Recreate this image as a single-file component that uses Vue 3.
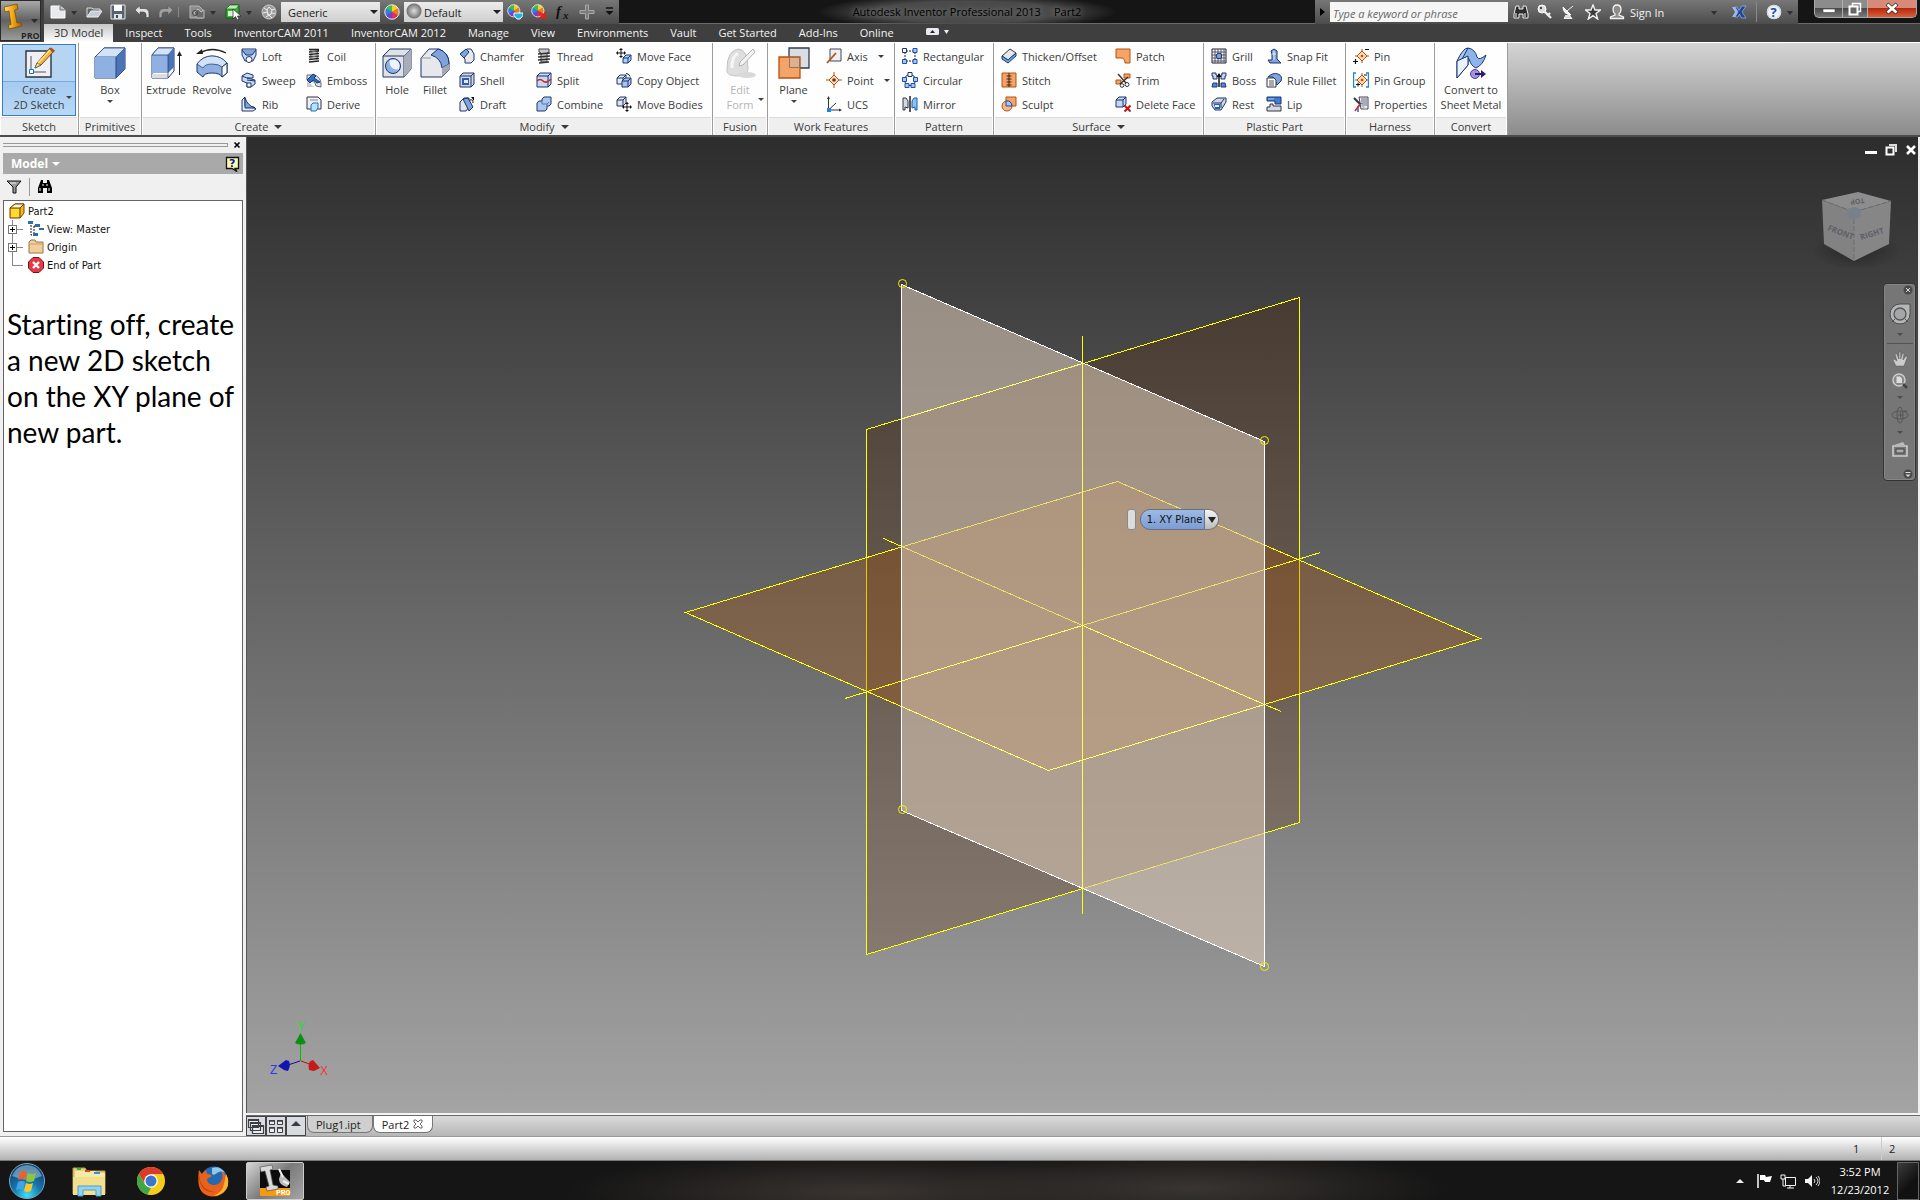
<template>
    <div class="inventor">
        <header class="top">
            <button class="app-menu" aria-label="Application menu">
                <Ico name="appI" :size="40" />
            </button>
            <div class="title-row">
                <div class="quick">
                    <button v-for="q in quickLeft" :key="q.name" class="tool" :class="{ drop: q.drop, bar: q.bar }" :aria-label="q.name">
                        <Ico :name="q.name" :size="16" />
                    </button>
                    <span class="combo">
                        <select aria-label="Material"><option>Generic</option></select>
                    </span>
                    <button class="tool wheel" aria-label="wheel"><Ico name="wheel" :size="16" /></button>
                    <span class="combo ball">
                        <select aria-label="Appearance"><option>Default</option></select>
                    </span>
                    <button v-for="q in quickRight" :key="q" class="tool" :aria-label="q"><Ico :name="q" :size="16" /></button>
                    <button class="tool last" aria-label="Customize"><Ico name="custom" :size="16" /></button>
                </div>
                <h1 class="caption"><span>Autodesk Inventor Professional 2013</span><span>Part2</span></h1>
                <div class="info">
                    <button class="expand" aria-label="Collapse search"></button>
                    <input type="text" aria-label="Search help" placeholder="Type a keyword or phrase">
                    <button v-for="q in infoTools" :key="q" class="tool" :aria-label="q"><Ico :name="q" :size="16" /></button>
                    <button class="sign">Sign In</button>
                    <button class="tool" aria-label="exchange"><Ico name="exchange" :size="16" /></button>
                    <i class="split"></i>
                    <button class="tool drop" aria-label="help"><Ico name="help" :size="16" /></button>
                </div>
                <div class="win-buttons">
                    <button aria-label="Minimize"><Ico name="winMin" :size="16" /></button>
                    <button class="restore" aria-label="Restore"><Ico name="winRestore" :size="16" /></button>
                    <button class="close" aria-label="Close"><Ico name="winClose" :size="16" /></button>
                </div>
            </div>
            <nav class="tabs">
                <button v-for="t in tabs" :key="t" :class="{ active: t === activeTab }" @click="activeTab = t">{{ t }}</button>
                <button class="mini" aria-label="Minimize ribbon"><Ico name="mini" :size="24" /></button>
            </nav>
        </header>

        <section class="ribbon">
            <div v-for="p in panels" :key="p.label" class="panel">
                <div class="panel-body" :class="p.cols">
                    <template v-for="(c, i) in p.items" :key="i">
                        <button v-if="c.big" class="big" :class="{ on: c.on, off: c.off, side: c.side, under: c.under }">
                            <span class="pic"><Ico :name="c.big" :size="32" /></span>
                            <span class="cap">{{ c.text }}</span>
                        </button>
                        <div v-else class="stack">
                            <button v-for="s in c.list" :key="s[1]" :class="{ more: s[2] }">
                                <Ico :name="s[0]" :size="16" />{{ s[1] }}
                            </button>
                        </div>
                    </template>
                </div>
                <div class="panel-label" :class="{ more: p.more }">{{ p.label }}</div>
            </div>
        </section>

        <main class="work">
            <aside class="browser">
                <div class="grip"><i></i><button aria-label="Close browser"><Ico name="gripX" :size="8" /></button></div>
                <div class="browser-head">
                    <button class="more">Model</button>
                    <button aria-label="Browser help"><Ico name="tip" :size="16" /></button>
                </div>
                <div class="browser-tools">
                    <button aria-label="Filter"><Ico name="funnel" :size="16" /></button>
                    <i></i>
                    <button aria-label="Find"><Ico name="find" :size="16" /></button>
                </div>
                <div class="tree-box">
                    <ul class="tree">
                        <li class="root"><Ico name="part" :size="16" />Part2</li>
                        <li v-for="n in nodes" :key="n.text" :class="n.state">
                            <i class="branch"></i><Ico :name="n.icon" :size="16" />{{ n.text }}
                        </li>
                    </ul>
                    <p class="note">Starting off, create<br>a new 2D sketch<br>on the XY plane of<br>new part.</p>
                </div>
            </aside>

            <div class="document">
                <div class="viewport">
                    <svg class="scene" viewBox="247 137 1671 976">
                        <g shape-rendering="crispEdges" fill="none" stroke-width="1">
                            <path d="M866.500 429.500L1299.500 297.500V822.500L866.500 954.500z" fill="rgba(98,45,0,.23)" stroke="#ffff00" />
                            <path d="M685.500 612.500L1117.500 481.500L1480.500 638.500L1048.500 770.500z" fill="rgba(173,86,10,.3)" stroke="#ffff00" />
                            <path d="M883.500 538.500L1082.500 625.500M1082.500 625.500L1320.500 552.500" stroke="#ffff00" />
                            <path d="M901.500 284.500L1264.500 441.500V966.500L901.500 810.500z" fill="rgba(217,200,182,.58)" />
                            <path d="M901.500 419L1082.500 363.500M901.500 706.500L1048.500 770.500L1264.500 704.500M1082.500 625.500L901.500 681M1082.500 625.500L1264.500 704.500" stroke="#ffff66" />
                            <path d="M1264.500 704.500L1281.500 711.500M901.500 681L845 698.500M1082.500 336V363M1082.500 888V914" stroke="#ffff00" />
                            <path d="M1082.500 363V888" stroke="#ffff4a" />
                            <path d="M901.500 284.500L1264.500 441.500V966.500L901.500 810.500z" stroke="#ffffff" />
                        </g>
                        <g fill="none" stroke="#f4f400">
                            <circle v-for="v in corners" :key="v.join()" :cx="v[0]" :cy="v[1]" r="4" />
                        </g>
                    </svg>

                    <div class="picker">
                        <i class="handle"></i>
                        <button class="choice">1. XY Plane</button><button class="pick-drop" aria-label="More planes"></button>
                    </div>

                    <div class="doc-buttons">
                        <button aria-label="Minimize document"><Ico name="docMin" :size="14" /></button>
                        <button aria-label="Restore document"><Ico name="docRestore" :size="14" /></button>
                        <button aria-label="Close document"><Ico name="docClose" :size="14" /></button>
                    </div>

                    <svg class="cube" viewBox="0 0 92 92" width="92" height="92">
                        <defs>
                            <radialGradient id="shade"><stop offset="0" stop-color="#222" stop-opacity=".8" /><stop offset="1" stop-color="#222" stop-opacity="0" /></radialGradient>
                        </defs>
                        <ellipse cx="46" cy="66" rx="44" ry="20" fill="url(#shade)" />
                        <path d="M12 16L48 8L81 17L44 28z" fill="#8d8d8d" />
                        <path d="M12 16L44 28V77L14 60z" fill="#828282" />
                        <path d="M44 28L81 17L79 60L44 77z" fill="#868686" />
                        <path d="M12 16L44 28L81 17M44 28V77" fill="none" stroke="#6c6c6c" stroke-dasharray="5 2" />
                        <path d="M37 25L44 23L51 25V33L44 36L37 33z" fill="#7a808a" />
                        <text x="0" y="0" transform="translate(17 46) rotate(21)">FRONT</text>
                        <text x="0" y="0" transform="translate(51 56) rotate(-17)">RIGHT</text>
                        <text class="up" x="0" y="0" transform="translate(54 14) rotate(172)">TOP</text>
                    </svg>

                    <div class="navbar">
                        <button class="end" aria-label="Close bar"><Ico name="navX" :size="10" /></button>
                        <button class="wheel-btn" aria-label="Steering wheel"><Ico name="steer" :size="24" /></button>
                        <i class="tri"></i>
                        <hr>
                        <button aria-label="Pan"><Ico name="hand" :size="16" /></button>
                        <button aria-label="Zoom"><Ico name="zoom" :size="16" /></button>
                        <i class="tri"></i>
                        <button aria-label="Orbit"><Ico name="orbit" :size="18" /></button>
                        <i class="tri"></i>
                        <button aria-label="Look at"><Ico name="look" :size="16" /></button>
                        <button class="end" aria-label="Bar options"><Ico name="navMore" :size="10" /></button>
                    </div>

                    <svg class="triad" viewBox="0 0 70 60" width="70" height="60">
                        <path d="M34.500 42V20" stroke="#00c000" />
                        <path d="M34 42L22 46" stroke="#1010a0" />
                        <path d="M35 42L46 46" stroke="#c01010" />
                        <path d="M34.500 14L29 24Q34.500 27 40 24z" fill="#0c8f14" />
                        <path d="M12 47L20 41L23 42Q25 46 22 52L18 51z" fill="#1414b4" />
                        <path d="M54 49L47 41Q41 42 43 51L48 52z" fill="#c81818" />
                        <text x="31" y="12" fill="#24e024">Y</text>
                        <text x="4" y="55" fill="#3434f0">Z</text>
                        <text x="54" y="56" fill="#f03a3a">X</text>
                    </svg>
                </div>

                <div class="doc-tabs">
                    <button class="sq" aria-label="Cascade"><Ico name="cascade" :size="18" /></button>
                    <button class="sq" aria-label="Tile"><Ico name="tile" :size="18" /></button>
                    <button class="sq" aria-label="Up"><Ico name="up" :size="18" /></button>
                    <button class="doc">Plug1.ipt</button>
                    <button class="doc current">Part2 <Ico name="tabX" :size="10" /></button>
                </div>
            </div>
        </main>

        <footer class="status"><span>1</span><span>2</span></footer>

        <footer class="taskbar">
            <button v-for="a in apps" :key="a" :aria-label="a"><Ico :name="a" :size="36" /></button>
            <button class="running" aria-label="Inventor"><Ico name="invTask" :size="36" /></button>
            <div class="tray">
                <Ico v-for="t in tray" :key="t" :name="t" :size="16" />
                <time><span>3:52 PM</span><span>12/23/2012</span></time>
            </div>
            <button class="desk" aria-label="Show desktop"></button>
        </footer>
    </div>
</template>

<script setup>
import { h, ref } from "vue"

const activeTab = ref('3D Model')
const tabs = ['3D Model', 'Inspect', 'Tools', 'InventorCAM 2011', 'InventorCAM 2012', 'Manage', 'View', 'Environments', 'Vault', 'Get Started', 'Add-Ins', 'Online']

const quickLeft = [
    { name: 'new', drop: true },
    { name: 'open' },
    { name: 'save' },
    { name: 'undo' },
    { name: 'redo', bar: true },
    { name: 'update', drop: true },
    { name: 'select', drop: true },
    { name: 'globe' },
]
const quickRight = ['wheelDown', 'wheelX', 'fx', 'plus']
const infoTools = ['binoc', 'key', 'dish', 'star', 'person']

const panels = [
    { label: 'Sketch', cols: 'one', items: [{ big: 'sketch', text: 'Create\n2D Sketch', on: true, side: true }] },
    { label: 'Primitives', cols: 'one', items: [{ big: 'box', text: 'Box', under: true }] },
    {
        label: 'Create', more: true, cols: 'create', items: [
            { big: 'extrude', text: 'Extrude' },
            { big: 'revolve', text: 'Revolve' },
            { list: [['loft', 'Loft'], ['sweep', 'Sweep'], ['rib', 'Rib']] },
            { list: [['coil', 'Coil'], ['emboss', 'Emboss'], ['derive', 'Derive']] },
        ]
    },
    {
        label: 'Modify', more: true, cols: 'modify', items: [
            { big: 'hole', text: 'Hole' },
            { big: 'fillet', text: 'Fillet' },
            { list: [['chamfer', 'Chamfer'], ['shell', 'Shell'], ['draft', 'Draft']] },
            { list: [['thread', 'Thread'], ['splitBody', 'Split'], ['combine', 'Combine']] },
            { list: [['moveFace', 'Move Face'], ['copyObj', 'Copy Object'], ['moveBodies', 'Move Bodies']] },
        ]
    },
    { label: 'Fusion', cols: 'one', items: [{ big: 'edit', text: 'Edit\nForm', off: true, side: true }] },
    {
        label: 'Work Features', cols: 'features', items: [
            { big: 'plane', text: 'Plane', under: true },
            { list: [['axis', 'Axis', true], ['point', 'Point', true], ['ucs', 'UCS']] },
        ]
    },
    { label: 'Pattern', cols: 'one', items: [{ list: [['rect', 'Rectangular'], ['circ', 'Circular'], ['mirror', 'Mirror']] }] },
    {
        label: 'Surface', more: true, cols: 'surface', items: [
            { list: [['thicken', 'Thicken/Offset'], ['stitch', 'Stitch'], ['sculpt', 'Sculpt']] },
            { list: [['patch', 'Patch'], ['trim', 'Trim'], ['delFace', 'Delete Face']] },
        ]
    },
    {
        label: 'Plastic Part', cols: 'plastic', items: [
            { list: [['grill', 'Grill'], ['boss', 'Boss'], ['rest', 'Rest']] },
            { list: [['snap', 'Snap Fit'], ['rule', 'Rule Fillet'], ['lip', 'Lip']] },
        ]
    },
    { label: 'Harness', cols: 'one', items: [{ list: [['pin', 'Pin'], ['pinGroup', 'Pin Group'], ['props', 'Properties']] }] },
    { label: 'Convert', cols: 'one', items: [{ big: 'sheet', text: 'Convert to\nSheet Metal' }] },
]

const nodes = [
    { icon: 'viewTree', text: 'View: Master', state: 'plus' },
    { icon: 'folder', text: 'Origin', state: 'plus' },
    { icon: 'endPart', text: 'End of Part', state: 'leaf' },
]
const corners = [[902.5, 283.5], [1264.5, 440.5], [902.5, 809.5], [1264.5, 966.5]]
const apps = ['orb', 'explorer', 'chrome', 'firefox']
const tray = ['trayUp', 'flag', 'net', 'sound']

const N = '#1c3570'
const L = '#c6daf2'
const M = '#7ea4da'
const O = '#f4a468'
const R = '#b8500c'
const wheelArt = '<path d="M8 8V1a7 7 0 0 1 6 3.500z" fill="#f5d21c"/><path d="M8 8L14 4.500a7 7 0 0 1 0 7z" fill="#ef7a1e"/><path d="M8 8L14 11.500A7 7 0 0 1 8 15z" fill="#e02a6a"/><path d="M8 8V15a7 7 0 0 1-6-3.500z" fill="#7a3cd0"/><path d="M8 8L2 11.500a7 7 0 0 1 0-7z" fill="#2c7fe8"/><path d="M8 8L2 4.500A7 7 0 0 1 8 1z" fill="#3cc04a"/><circle cx="8" cy="8" r="7.200" fill="none" stroke="#eee"/>'
const smallWheel = `<g transform="scale(.85)">${wheelArt}</g>`
const cubeAt = (x, y, s, f) => `<path d="M${x} ${y + 3}l3-3h${s - 3}v${s - 3}l-3 3h-${s - 3}z" fill="${f}" stroke="${N}"/><path d="M${x} ${y + 3}h${s - 3}v${s - 3}m0-${s - 3}l3-3" fill="none" stroke="${N}"/>`
const arrows = (x, y) => `<path d="M${x - 4} ${y}h8M${x} ${y - 4}v8" stroke="#111"/><path d="M${x - 5} ${y}l2-2v4zM${x + 5} ${y}l-2-2v4zM${x} ${y - 5}l-2 2h4zM${x} ${y + 5}l-2-2h4z" fill="#111"/>`
const pinArt = `<path d="M9 3L14 8L9 13L4 8z" fill="#ffd9b8" stroke="${R}"/><path d="M9 1v3M9 12v3M2 8h3M13 8h3" stroke="${R}"/><circle cx="9" cy="8" r="1.300" fill="${R}"/>`

const icons = {
    appI: '<defs><linearGradient id="gold" x1="0" x2="1"><stop offset="0" stop-color="#fbdc80"/><stop offset=".5" stop-color="#f0a818"/><stop offset="1" stop-color="#a86400"/></linearGradient></defs><path d="M3 6L16 3L17 8L13.500 9L16 22L20 21.500L20.500 25L8 28L7.500 24L10 23.500L8 10L4 11z" fill="url(#gold)" stroke="#7a4c04" stroke-width=".8"/><path d="M30 18h7l-3.500 4z" fill="#2b2b2b"/><text x="20" y="38" font-size="9" font-family="Open Sans" font-weight="700" fill="#262626">PRO</text>',
    new: '<path d="M1 2h9l5 4v8H1z" fill="#e9eaec" stroke="#fff"/><path d="M10 2v4h5" fill="#b8babd" stroke="#777"/>',
    open: '<path d="M1 13V4h5l1 1h7v3" fill="none" stroke="#ddd"/><path d="M1 13L5 7h11l-4 6z" fill="#c6cdd6" stroke="#eee"/>',
    save: '<path d="M1 1h14v14H1z" fill="#59616e" stroke="#e8e8e8"/><path d="M4 1h8v6H4z" fill="#fff"/><path d="M4 10h8v5H4z" fill="#dfe4ea"/><path d="M6 11h2v3H6z" fill="#444"/>',
    undo: '<path d="M1 6l5-4.500v3h4q5 0 5 5v4h-3v-3q0-2.500-3-2.500H6v3z" fill="#e4e4e4" stroke="#3c3c3c" stroke-width=".6"/>',
    redo: '<path d="M15 6l-5-4.500v3H6q-5 0-5 5v4h3v-3q0-2.500 3-2.500h3v3z" fill="#a0a0a0" stroke="#555" stroke-width=".6"/>',
    update: '<path d="M1 2h9l4 4v8H1z" fill="#8c8c8c" stroke="#b4b4b4"/><path d="M5 9l4-4 3 3 3-2v8H8z" fill="#6b6b6b" stroke="#bdbdbd"/><circle cx="6" cy="9" r="2.500" fill="none" stroke="#444"/>',
    select: '<path d="M1 5l4-4h9v9l-3 4H1z" fill="#3fae3a" stroke="#155d17"/><path d="M1 5l4-4h9l-3 4z" fill="#b9ecb0" stroke="#155d17" stroke-width=".6"/><path d="M3 7h6v5H3z" fill="#d8f5d2"/><path d="M8 5v10l2.500-2.500L12 16l2-1-1.500-3H16z" fill="#fff" stroke="#222" stroke-width=".7"/>',
    globe: '<circle cx="8" cy="8" r="7" fill="#9b9b9b" stroke="#ccc"/><path d="M3 4l3 2 2-3 3 3 3-1M2 9l4-1 2 3 4-2 2 1M5 13l3-2 3 3M6 6l1 5M11 6l-1 4" fill="none" stroke="#eee"/>',
    wheel: wheelArt,
    wheelDown: smallWheel + '<path d="M7 9h9v2.500L13 15h-3l-3-3.500z" fill="#1fb4e4" stroke="#fff"/>',
    wheelX: smallWheel + '<path d="M8.500 8.500l6.500 6.500M15 8.500L8.500 15" stroke="#e8200f" stroke-width="2.400"/>',
    fx: '<text x="1" y="12" font-size="15" font-weight="700" font-style="italic" font-family="Liberation Serif" fill="#111">f</text><text x="8" y="15" font-size="11" font-weight="700" font-style="italic" font-family="Liberation Serif" fill="#111">x</text>',
    plus: '<path d="M6.500 1h3v5.500H15v3H9.500V15h-3V9.500H1v-3h5.500z" fill="#7c7c7c" stroke="#a9a9a9"/>',
    custom: '<path d="M5 4h7" stroke="#111" stroke-width="1.500"/><path d="M4.500 7h8L8.500 11z" fill="#111"/>',
    binoc: '<path d="M3 2h3v3h4V2h3l2 8v4h-5v-4H6v4H1v-4z" fill="#2b2b2b" stroke="#efefef"/><path d="M3 9v4M12 9v4" stroke="#fff"/>',
    key: '<circle cx="5" cy="5" r="4" fill="#ddd" stroke="#fff"/><circle cx="4" cy="4" r="1.200" fill="#444"/><path d="M7 7l7 7M11 11l2-2" stroke="#eee" stroke-width="2.400"/>',
    dish: '<path d="M2 3q0 7 8 8L2 3z" fill="#eee" stroke="#fff"/><path d="M6 7l6-5M5 11l-2 3.500h8L8 11" fill="#ddd" stroke="#eee"/>',
    star: '<path d="M8 1l2 5h5.500L11 9.500l1.700 5.500L8 11.700 3.300 15 5 9.500.5 6H6z" fill="#3c3c3c" stroke="#f2f2f2" stroke-width="1.400"/>',
    person: '<path d="M8 1q4 0 4 4.500 0 3-2 4.500v1l4.500 2v1.500h-13V13L6 11v-1Q4 8.500 4 5.500 4 1 8 1z" fill="#8c8c8c" stroke="#f5f5f5" stroke-width="1.300"/>',
    exchange: '<path d="M1 3h4l2.500 5L5 13H1l3-5z" fill="#9db8e8"/><path d="M15 2h-4L8 6.500 6 3H4l3 5-3 5h3l1.500-3 2 4H15l-4-6z" fill="#1c459f" stroke="#b8ccf0" stroke-width=".6"/>',
    help: '<circle cx="8" cy="8" r="7.300" fill="#fff"/><circle cx="8" cy="8" r="6.500" fill="#eef3fb" stroke="#c5cfdf"/><text x="4.500" y="13" font-size="13" font-weight="700" font-family="Open Sans" fill="#1e4b9b">?</text>',
    winMin: '<path d="M2 8h12v3.500H2z" fill="#fff" stroke="#555" stroke-width=".7"/>',
    winRestore: '<path d="M5.500 2.500h8v8h-8z" fill="none" stroke="#fff" stroke-width="1.500"/><path d="M2.500 5.500h8v8h-8z" fill="#666" stroke="#fff" stroke-width="2"/>',
    winClose: '<path d="M3 3l10 9M13 3L3 12" stroke="#333" stroke-width="4"/><path d="M3.500 3.500l9 8M12.500 3.500l-9 8" stroke="#fff" stroke-width="2.600"/>',
    mini: '<rect x="0" y="8" width="13" height="7" rx="1.500" fill="#e9e9f2"/><path d="M4 13h5l-2.500-3z" fill="#222"/><path d="M18 10h5l-2.500 4z" fill="#eee"/>',
    sketch: `<path d="M3 4h25v26H3z" fill="#eef0f4" stroke="#2c3440" stroke-width="1.400"/><path d="M8 9v16h15" fill="none" stroke="#555"/><path d="M6.500 22.500h4v4h-4z" fill="#fff" stroke="#1b72c0"/><path d="M12 21l2-5L27 1l4 3L18 18z" fill="#f6b63a" stroke="#7a4a10"/><path d="M12 21l2-5 4 2z" fill="#f3dcb8" stroke="#444" stroke-width=".6"/><path d="M26 2l2-1.500 4 3L30 6z" fill="#a5502c"/><path d="M15 16L27 3" stroke="#fde08a" stroke-width="1.500"/>`,
    box: `<path d="M1 10L10 1H31V22L22 31H1z" fill="${M}" stroke="${N}" stroke-linejoin="round"/><path d="M1 10L10 1H31L22 10z" fill="#d3e3f6" stroke="${N}" stroke-width=".7"/><path d="M22 10L31 1V22L22 31z" fill="#4a74b4"/><path d="M1 10H22V31H1z" fill="#8eb1e2"/><path d="M22 10V31" stroke="#27478a"/>`,
    extrude: `<path d="M2 8L8 1H24V24L18 31H2z" fill="#fff" stroke="${N}"/><path d="M2 8H18V26H2z" fill="#8eb1e2"/><path d="M2 8L8 1H24L18 8z" fill="#d3e3f6" stroke="${N}" stroke-width=".7"/><path d="M18 8L24 1V20L18 26z" fill="#4a74b4"/><path d="M2 27h16v4H2z" fill="#ddd"/><path d="M18 8V31" stroke="${N}" stroke-width=".7"/><path d="M29.500 28V6" stroke="#222"/><path d="M27 9l2.500-5L32 9z" fill="#222"/>`,
    revolve: `<path d="M1 17Q7 9 16 9t15 7v10l-5 4q-2-4-10-4t-9 4l-6-5z" fill="#8eb1e2" stroke="${N}"/><path d="M1 17Q7 9 16 9t15 7l-5 4q-3-3-10-3t-9 4z" fill="#d3e3f6" stroke="${N}" stroke-width=".7"/><path d="M26 20l5-4v10l-5 4z" fill="#fff" stroke="${N}"/><path d="M4 6Q16-1 30 6" fill="none" stroke="#222" stroke-width="1.300"/><path d="M0 7l6-5 1 5z" fill="#222"/>`,
    hole: `<path d="M2 9L9 2H30V22L23 30H2z" fill="#dfe1e5" stroke="${N}"/><path d="M2 9H23V30M23 9L30 2" fill="none" stroke="${N}"/><path d="M23 9L30 2V22L23 30z" fill="#a9adb6"/><circle cx="12" cy="19" r="7.500" fill="#8eb1e2" stroke="${N}"/><path d="M9 13a7 7 0 0 0 9 9 7 7 0 0 0-4-9.500z" fill="#eef4fb"/>`,
    fillet: `<path d="M2 11L10 2H20Q30 6 30 16V23L23 30H2z" fill="#e6e8eb" stroke="${N}"/><path d="M12 8L19 2Q30 5 30 17L23 21Q22 11 12 8z" fill="#7fa4dc" stroke="${N}"/><path d="M2 11h10" stroke="#999"/><path d="M23 21V30L30 23V17z" fill="#a4a8b0"/>`,
    edit: '<path d="M3 22Q3 4 14 2q10 0 10 20 0 6-10 7Q3 29 3 24z" fill="#dedede" stroke="#c4c4c4"/><path d="M8 21Q8 8 14 7" fill="none" stroke="#f6f6f6" stroke-width="3"/><path d="M16 15L29 2l2 3-12 13-4 1z" fill="#f2f2f2" stroke="#b2b2b2"/><ellipse cx="23" cy="28" rx="9" ry="3" fill="#d8d8d8"/>',
    plane: `<path d="M11 1h20v20H11z" fill="#d9dde4" stroke="#333a48" stroke-width="1.300"/><path d="M1 10h21v21H1z" fill="#f4a468" stroke="${R}" stroke-width="1.300"/><path d="M11.500 10.500h10v10h-10z" fill="#e0b08c" stroke="#94735a"/>`,
    sheet: `<path d="M2 14Q8 1 13 1V18L2 31z" fill="#a9c8ee" stroke="${N}"/><path d="M13 1Q20 2 22 10q2 4 9-2-3 10-10 13-5-2-7-9-2-4-8 2z" fill="#8db5ea" stroke="${N}"/><path d="M2 14L13 9V18L2 31z" fill="#eaf2fb" stroke="${N}"/><circle cx="20" cy="27" r="4.500" fill="#a393dd" stroke="#4c3f93"/><path d="M20 27h8" stroke="#2c1c63" stroke-width="2"/><path d="M26 23l5 4-5 4z" fill="#2c1c63"/>`,
    loft: `<path d="M1 1h14v6l-3 6H4L1 7z" fill="${L}" stroke="${N}"/><path d="M1 2l4 5h6l4-5" fill="${M}" stroke="${N}"/><circle cx="8" cy="11.500" r="3" fill="#fff" stroke="${N}"/>`,
    sweep: `<path d="M1 4l5-3 6 2v3H6l8 2v4l-4 3H6v-4L1 9z" fill="${L}" stroke="${N}"/><path d="M6 11h4v4H6zM1 4l5 2M6 8l8 1" fill="#fff" stroke="${N}"/>`,
    rib: `<path d="M1 4l3-3v9l9 1 2 2-3 2H1z" fill="#e6ecf5" stroke="${N}"/><path d="M4 2q3 8 10 10H4z" fill="${M}" stroke="${N}"/>`,
    coil: '<path d="M3 1.500h10M3 4l10-1M3 6.500l10-1M3 9l10-1M3 11.500l10-1M3 14l10-1" stroke="#222" stroke-width="1.600"/><path d="M4 2.500l8 2M4 5l8 2M4 7.500l8 2M4 10l8 2" stroke="#777"/>',
    emboss: `<path d="M1 3h8q6 3 6 9v3l-5-1Q9 8 1 8z" fill="#dde1e8" stroke="#667"/><path d="M1 8l6-6 3 2-2 2 6 4-3 1-4-3-3 3z" fill="#2d6fc4" stroke="${N}"/><path d="M1 9l7 6H1z" fill="#c9ccd2"/>`,
    derive: `<path d="M1 1h11l3 3v9H1z" fill="#eef0f3" stroke="#334"/><path d="M4 4h8" stroke="#889"/><path d="M5 9l2-2h5v5l-2 3H5z" fill="#bfe0fa" stroke="#1b72c0"/>`,
    chamfer: `<path d="M1 6L8 1h4l3 5v6l-3 3H6V11z" fill="#e6e8eb" stroke="${N}"/><path d="M1 6l6-5 3 3-5 6z" fill="${M}" stroke="${N}"/>`,
    shell: cubeAt(1, 1, 14, '#d4d8de') + `<path d="M3 6h7v7H3z" fill="#2d5bb0"/><path d="M5 8h4v3H5z" fill="#dfeafa"/>`,
    draft: `<path d="M1 6l4-4 5 0v9l-3 4H1z" fill="#e2e4e8" stroke="${N}"/><path d="M4 3l5-1 5 9-4 4z" fill="${M}" stroke="${N}"/><path d="M11 4q3-1 3 3" fill="none" stroke="#111"/><path d="M12 1h3v4z" fill="#111"/>`,
    thread: '<path d="M3 1h10v3l-2 1v9H5V5L3 4z" fill="#c4c8cc" stroke="#444"/><path d="M2 6l12-1M2 9l12-1M2 12l12-1M3 15l10-1" stroke="#333" stroke-width="1.300"/>',
    splitBody: cubeAt(1, 1, 14, L) + '<path d="M1 9q3-3 6 0t8-2" fill="none" stroke="#d81f1f" stroke-width="1.500"/>',
    combine: `<path d="M1 7l2-2h3V3l2-2h7v7l-2 2h-2v3l-2 2H1z" fill="#a9c6ec" stroke="${N}"/><path d="M6 5v3h5M11 10V8l2-2" fill="none" stroke="#5577b4"/>`,
    moveFace: arrows(5, 5) + cubeAt(7, 7, 8, '#a7d4fb'),
    copyObj: cubeAt(1, 3, 9, '#e6e8ec') + cubeAt(6, 6, 9, '#a7c4f0') + '<path d="M10 1.500q3 0 4 3" fill="none" stroke="#111"/>',
    moveBodies: cubeAt(1, 1, 9, '#e1e3e6') + arrows(11, 11),
    axis: `<path d="M4 1h11v12H4z" fill="#eef0f3" stroke="#445"/><path d="M1 15L10 5" stroke="${R}" stroke-width="1.800"/>`,
    point: `<path d="M8 3L13 8L8 13L3 8z" fill="#ffdcbc" stroke="${R}"/><path d="M8 0v4M8 12v4M0 8h4M12 8h4" stroke="${R}"/><circle cx="8" cy="8" r="1.800" fill="#6b3510"/>`,
    ucs: '<path d="M2.500 2v12h12M2.500 14L10 7" fill="none" stroke="#333"/><path d="M1 12h4v4H1z" fill="#1b86e0"/><path d="M1 3l1.500-3L4 3zM13 12.500l3 1.500-3 1.500z" fill="#333"/>',
    rect: `<path d="M4 3h8M4 13h8M3 4v8M13 4v8" stroke="#222" stroke-dasharray="2 1"/><path d="M.5.5h4v4h-4z" fill="#fff" stroke="${N}"/><path d="M11 .5h4v4h-4zM.5 11.500h4v4h-4zM11 11.500h4v4h-4z" fill="#a8c8f4" stroke="#1d4fae"/>`,
    circ: `<circle cx="8" cy="8" r="5.500" fill="none" stroke="#222"/><path d="M6 .5h4v4H6z" fill="#fff" stroke="${N}"/><path d="M.5 5.500h4v4h-4zM11.500 5.500h4v4h-4zM3 11.500h4v4H3zM9 11.500h4v4H9z" fill="#a8c8f4" stroke="#1d4fae"/>`,
    mirror: `<path d="M1 2h3l2 3v7l-3-1v3H1z" fill="#d5dae2" stroke="#334"/><path d="M15 2h-3l-2 3v7l3-1v3h2z" fill="#8cc2f2" stroke="#1a5fa8"/><path d="M8 0v16" stroke="#111" stroke-width="1.400"/>`,
    thicken: `<path d="M1 8l8-7 6 4-8 7z" fill="#e4e7eb" stroke="#333"/><path d="M1 8l6 4 8-7v3l-8 7-6-4z" fill="#65b1e6" stroke="${N}"/>`,
    stitch: `<path d="M1 1h14v14H1z" fill="${O}" stroke="${R}"/><path d="M8 1v14M5.500 4h5M5.500 7h5M5.500 10h5M5.500 13h5" stroke="#40220c"/>`,
    sculpt: `<path d="M5 1h10v9H5z" fill="${O}" stroke="${R}"/><circle cx="6" cy="10" r="5" fill="#f8b98a" stroke="${R}"/><path d="M5 5q5-1 6 5H5z" fill="#a8c8f4" stroke="#1d4fae"/>`,
    patch: `<path d="M1 1h14v14h-5q0-5-4-5H1z" fill="${O}" stroke="${R}"/>`,
    trim: `<path d="M9 2h6v4H9zM1 8h5v4H1z" fill="${O}" stroke="${R}"/><path d="M3 2l8 9M13 5L5 12" stroke="#333" stroke-width="1.400"/><circle cx="12" cy="12.500" r="2" fill="none" stroke="#333"/><circle cx="7" cy="13.500" r="1.800" fill="none" stroke="#333"/>`,
    delFace: cubeAt(1, 1, 10, '#c4d8f4') + '<path d="M9.500 9.500l6 6M15.500 9.500l-6 6" stroke="#c81414" stroke-width="2"/>',
    grill: '<path d="M1 1h14v14H1z" fill="#fff" stroke="#223"/><path d="M4 1v14M7 1v14M10 1v14M13 1v14M1 4h14M1 7h14M1 10h14M1 13h14" stroke="#556"/><circle cx="8" cy="8" r="2.800" fill="#7ea4da" stroke="#1c3570"/>',
    boss: `<path d="M1 1h4v2h1v4H2V4H1zM15 1h-4v2h-1v4h4V4h1z" fill="${L}" stroke="${N}"/><path d="M2 11h4v4H1zM14 11h-4v4h5z" fill="#4f8ae0" stroke="${N}"/><path d="M8 15V2" stroke="#111" stroke-width="1.500"/><path d="M5.500 5L8 1l2.500 4z" fill="#111"/>`,
    rest: `<path d="M1 6l5-4h9v4l-5 8H4l-3-4z" fill="#cfd6e2" stroke="${N}"/><path d="M2 7h8l3-4M10 7v5" fill="none" stroke="${N}"/><path d="M3 8h6v5H4z" fill="#2c5cae"/><path d="M4 9h4v2H4z" fill="#eaf0fa"/>`,
    snap: `<path d="M5 3l3-2 3 2v8l4 4H4l-2-3h4V6z" fill="${M}" stroke="${N}"/><path d="M6 6h4M8 3v9" stroke="#e7f0fb"/>`,
    rule: `<path d="M2 5Q7 0 12 2t3 7l-4 4-4-8z" fill="${M}" stroke="${N}"/><path d="M1 6h7l2 2v7H1z" fill="#fff" stroke="#334"/><path d="M3 9h5M3 11h5M3 13h5" stroke="#555"/>`,
    lip: `<path d="M1 1h14v7H9V5H1z" fill="#3c7cd4" stroke="${N}"/><path d="M1 15h14v-5H7V8H4v3H1z" fill="#d5d9df" stroke="#334"/><path d="M2 3h6" stroke="#a9cbf5"/>`,
    pin: pinArt + '<path d="M0 13.500h5M2.500 11v5M12 1.500h4" stroke="#111" stroke-width="1.200"/>',
    pinGroup: pinArt + '<path d="M3 1H.5v14H3M13 1h2.500v14H13" fill="none" stroke="#1b86e0" stroke-width="1.400"/><path d="M3 12.500h4M5 10.500v4M11 3h3" stroke="#111"/>',
    props: '<path d="M6 1h9v12H8z" fill="#eef0f3" stroke="#445"/><path d="M8 3h6M8 5h6M9 7h5M9 9h5" stroke="#667"/><path d="M1 2l7 7" stroke="#333" stroke-width="2"/><path d="M9 7l-4 4v5" fill="none" stroke="#2a62c8" stroke-width="1.500"/><path d="M7 8l-5 7" stroke="#d42a2a" stroke-width="1.500"/><path d="M8 8l5 6" stroke="#b8b8b8" stroke-width="1.500"/>',
    gripX: '<path d="M1.500 1.500l5 5M6.500 1.500l-5 5" stroke="#000" stroke-width="1.600"/>',
    tip: '<path d="M1.500 1.500h12v11H10l2 3-5-3H1.500z" fill="#ffffb0" stroke="#111" stroke-width="1.300"/><text x="4" y="11" font-size="11" font-weight="700" font-family="DejaVu Sans" fill="#1010a0">?</text>',
    funnel: '<path d="M1 2h14L10 8v6H7V8z" fill="#9a9a9a" stroke="#111" stroke-linejoin="round"/><path d="M4 4h6" stroke="#eee"/>',
    find: '<path d="M4 1h2v3h4V1h2l3 8v5h-5V9H6v5H1V9z" fill="#000"/><path d="M3 9v3M12 9v3M6 5v2M10 5v2" stroke="#fff"/>',
    part: '<path d="M1 5l5-4h9v9l-4 5H1z" fill="#f6b916" stroke="#7a3c08"/><path d="M1 5l5-4h9l-4 4z" fill="#fff7cc" stroke="#7a3c08"/><path d="M11 5v10" stroke="#7a3c08"/><path d="M2 6h8v8H2z" fill="#ffdd30"/>',
    viewTree: '<path d="M3 4v10h2M6 5h5M6 5v8h3" fill="none" stroke="#111" stroke-dasharray="2 1"/><path d="M0 0h5v3H0zM7 3h5v3H7zM5 12h5v3H5zM11 7h5v2h-5z" fill="#2e6da8"/>',
    folder: '<path d="M1 14V3l2-2h4l1 2h7v11z" fill="#f1cf9c" stroke="#9a7546"/><path d="M1 5h14" stroke="#c59f6a"/>',
    endPart: '<path d="M5 .5h6L15.500 5v6L11 15.500H5L.5 11V5z" fill="#e43a45" stroke="#7a1018"/><path d="M5 5l6 6M11 5l-6 6" stroke="#fff" stroke-width="2.400"/>',
    docMin: '<path d="M1 8h12v3H1z" fill="#fff"/>',
    docRestore: '<path d="M5 2h7v7" fill="none" stroke="#ddd" stroke-width="2"/><path d="M2.500 4.500h7v7h-7z" fill="#333" stroke="#fff" stroke-width="2"/>',
    docClose: '<path d="M3 3l8 8M11 3l-8 8" stroke="#fff" stroke-width="2.600"/>',
    navX: '<circle cx="5" cy="5" r="4.500" fill="#4a4a4a"/><path d="M3 3l4 4M7 3L3 7" stroke="#ddd"/>',
    navMore: '<circle cx="5" cy="5" r="4.500" fill="#4a4a4a"/><path d="M2.500 3.500h5" stroke="#ddd"/><path d="M2.500 5.500h5L5 8z" fill="#ddd"/>',
    steer: '<path d="M12 2h10v10A10 10 0 1 1 12 2z" fill="#b4b6b8" stroke="#4c4c4c"/><circle cx="12" cy="12" r="6" fill="#a4a6a8" stroke="#555" stroke-width="1.300"/><path d="M7 17l-3 3M17 17l3 3" stroke="#555"/>',
    hand: '<path d="M4 15L1 9l1-1 3 2-2-7 1.500-.5L7 8V1h1.700v7l1.800-6 1.500.5L11 9l3-4 1.300 1L12 15z" fill="#ccc" stroke="#555" stroke-width=".5"/>',
    zoom: '<circle cx="7" cy="7" r="6" fill="#888" stroke="#ccc" stroke-width="1.500"/><path d="M4.500 3.500H8l2 2V10H4.500z" fill="#ddd"/><path d="M11 11l4 4" stroke="#444" stroke-width="2.600"/>',
    orbit: '<ellipse cx="9" cy="9" rx="8" ry="4" fill="none" stroke="#555"/><ellipse cx="9" cy="9" rx="3" ry="8" fill="none" stroke="#555"/><path d="M7 9h5M9.500 6.500v5M13 5h3" stroke="#555"/>',
    look: '<path d="M1 5h14v10H1z" fill="#777" stroke="#ccc" stroke-width="1.600"/><path d="M4 8h8v4H4z" fill="#aaa" stroke="#444"/><path d="M2 4l9-3 2 3z" fill="#bbb"/>',
    cascade: '<path d="M1.500 2.500h10v8h-10zM3.500 5.500h10v8h-10zM5.500 8.500h11v8h-11z" fill="#eee" stroke="#3a3e46" stroke-width="1.200"/><path d="M1.500 3h10M3.500 6h10M5.500 9h11" stroke="#3a3e46" stroke-width="2"/>',
    tile: '<path d="M2.500 3.500h5v4h-5zM10.500 3.500h5v4h-5zM2.500 10.500h5v5h-5zM10.500 10.500h5v5h-5z" fill="#eee" stroke="#3a3e46"/><path d="M2 4h6M10 4h6M2 11h6M10 11h6" stroke="#3a3e46" stroke-width="1.500"/>',
    up: '<path d="M4 9h10L9 4z" fill="#3a3e46"/>',
    tabX: '<path d="M1 1h2l2 2 2-2h2v2L7 5l2 2v2H7L5 7 3 9H1V7l2-2-2-2z" fill="#fff" stroke="#666"/>',
    orb: '<defs><radialGradient id="orbBlue" cx=".5" cy=".9" r=".9"><stop offset="0" stop-color="#3fe0f8"/><stop offset=".45" stop-color="#1673ac"/><stop offset="1" stop-color="#0b3a66"/></radialGradient></defs><circle cx="18" cy="18" r="17.500" fill="url(#orbBlue)" stroke="#7fa9c4"/><path d="M3 13Q8 2 18 2t15 11Q18 20 3 13z" fill="#a9cadf" opacity=".55"/><path d="M11 9q4-2 7 0l-2 8q-3-2-7 0z" fill="#f0602a"/><path d="M19 10q4 2 8 0l-2 8q-4 2-8 0z" fill="#8cc63c"/><path d="M9 19q4-2 7 0l-2 8q-3-2-7 0z" fill="#3ea6e8"/><path d="M17 20q4 2 7 0l-2 8q-4 2-7 0z" fill="#fbc72c"/>',
    explorer: '<path d="M2 5h12l2 3h18v23H2z" fill="#e8cf78" stroke="#b89a48"/><path d="M4 8h20l2 2h8v20H4z" fill="#f7e9a8"/><path d="M6 5h4v2H6z" fill="#2fb04a"/><path d="M14 7h5v2h-5z" fill="#d8452c"/><path d="M23 9h6v2h-6z" fill="#3c8ce0"/><path d="M2 14h32v18H2z" fill="#f3e08c"/><path d="M7 33V23h23v10h-5v-6H12v6z" fill="#93d2f2" stroke="#4f9dca"/>',
    chrome: '<circle cx="18" cy="18" r="14" fill="#f7cd1c"/><path d="M18 11h12.200A14 14 0 0 0 5.900 11L12 21z" fill="#dc3a2c"/><path d="M5.900 11L12.200 22 18 25l-3.500 6.600A14 14 0 0 1 5.900 11z" fill="#3fa648"/><circle cx="18" cy="18" r="6.800" fill="#fff"/><circle cx="18" cy="18" r="5.500" fill="#3c76c8"/>',
    firefox: '<circle cx="19" cy="17" r="13.500" fill="#2469b4"/><path d="M17 5q8-3 13 5-5-3-8 0t-5 1z" fill="#8ec9ee"/><path d="M4 7l3 4 4-4 1 4q4 0 5 2l-5 3q0 5 6 6 6 0 8-4 3-4 0-10 8 5 7 14Q30 33 18 33.500 5 33 3.500 20 3 12 4 7z" fill="#e8621a"/><path d="M31 11q4 7 1 14-5 8-14 8 10-4 11-12 1-5 2-10z" fill="#f9b52a"/><path d="M4 9q-1 12 6 18 6 3 10 2Q4 27 4 9z" fill="#c93f10"/>',
    invTask: '<path d="M3 7h30v26H3z" fill="#0c0c0c"/><path d="M24 10l9 9-3 5q-8-2-8-8z" fill="#bcbcbc"/><path d="M22 6l4 8M26 18l6 3" stroke="#eee" stroke-width="2"/><path d="M3 25h30v8H3z" fill="#f59a0c"/><path d="M3 4l12-2 1 4-3 1 3 15 5 1v3l-11 2-1-4 3-1L8 8 4 9z" fill="#d8d8d8" stroke="#555" stroke-width=".7"/><text x="19" y="32" font-size="8" font-weight="700" font-family="Liberation Mono" fill="#fff">PRO</text>',
    trayUp: '<path d="M4 10h8L8 6z" fill="#eee"/>',
    flag: '<path d="M2 1v14" stroke="#fff" stroke-width="1.500"/><path d="M4 2h5l1 2 6-1-2 6H9L8 7H4z" fill="#fff"/>',
    net: '<path d="M5.500 4.500h10v8h-10zM7 15h7M10 12v3M1 2v4h4V2M3 6v7h3M2 1v2M4 1v2" fill="none" stroke="#f4f4f4"/>',
    sound: '<path d="M1 6h3l4-4v12l-4-4H1z" fill="#f4f4f4"/><path d="M10 6q2 2 0 4M12 4q4 4 0 8M14 3q4 5 0 10" fill="none" stroke="#ddd"/>',
}

const Ico = (props) => h('svg', {
    viewBox: `0 0 ${props.size} ${props.size}`,
    width: props.size,
    height: props.size,
    'aria-hidden': 'true',
    innerHTML: icons[props.name],
})
Ico.props = ['name', 'size']
</script>

<style>
body {
    margin: 0;
    background: #161616;
}
</style>

<style scoped>
.inventor {
    display: flex;
    flex-direction: column;
    min-height: 100vh;
    font-family: "Open Sans", "Noto Sans", sans-serif;
    font-size: 11px;
    color: #3b3b3b;
}

button,
input,
select {
    font: inherit;
    color: inherit;
    border: none;
    background: none;
    margin: 0;
    padding: 0;
    border-radius: 0;
}

button {
    display: flex;
    align-items: center;
    justify-content: center;
    white-space: nowrap;
}

svg {
    display: block;
    flex: none;
}

/* title bar and tabs */
.top {
    display: grid;
    grid-template-columns: 44px 1fr;
    grid-template-rows: 24px 18px;
    background: #3f3f3f;
}

.app-menu {
    grid-row: 1 / 3;
    width: 41px;
    height: 41px;
    background: linear-gradient(#a8a8a8, #626262 50%, #9c9c9c);
    border: 1px solid #2a2a2a;
}

.title-row {
    display: flex;
    align-items: stretch;
    background: #151515;
    box-shadow: inset 0 -1px #6a6a6a;
}

.quick,
.info {
    display: flex;
    align-items: center;
    background: linear-gradient(#777, #4c4c4c);
}

.quick {
    padding-left: 2px;
}

.tool {
    position: relative;
    width: 24px;
    height: 22px;
}

.tool.drop {
    width: 36px;
    padding-right: 12px;
}

.tool.drop::after {
    content: '';
    position: absolute;
    right: 5px;
    top: 10px;
    border: 3px solid transparent;
    border-top: 4px solid #2e2e2e;
    border-bottom: none;
}

.tool.bar {
    margin-right: 7px;
    box-shadow: 7px 0 0 -6px #888;
}

.tool.last {
    width: 20px;
}

.combo {
    position: relative;
    height: 20px;
    width: 99px;
    background: linear-gradient(#ececec, #cfcfcf);
}

.combo select {
    appearance: none;
    width: 100%;
    height: 20px;
    padding-left: 7px;
    color: #1c1c1c;
}

.combo.ball select {
    padding-left: 20px;
    background: radial-gradient(circle at 10px 9px, #ddd, #777 7px, transparent 8px);
}

.combo::after {
    content: '';
    position: absolute;
    right: 2px;
    top: 8px;
    border: 4px solid transparent;
    border-top: 4px solid #222;
    border-bottom: none;
}

.caption {
    flex: 1;
    display: flex;
    gap: 13px;
    justify-content: center;
    align-items: center;
    margin: 0;
    padding-bottom: 2px;
    font-size: 11px;
    font-weight: 400;
    color: #000;
    background: radial-gradient(ellipse 150px 18px at center, #4a4a4a 60%, transparent);
}

.caption span {
    text-shadow: 0 0 6px #999;
}

.expand {
    width: 15px;
    height: 22px;
}

.expand::after {
    content: '';
    border: 4px solid transparent;
    border-left: 5px solid #000;
    border-right: none;
}

.info input {
    width: 172px;
    height: 18px;
    padding: 2px 3px 0;
    background: #f6f6f6;
    font-style: italic;
    margin-right: 1px;
}

.info input::placeholder {
    color: #666;
    opacity: 1;
}

.sign {
    position: relative;
    width: 98px;
    justify-content: flex-start;
    padding-left: 1px;
    color: #f2f2f2;
}

.sign::after {
    content: '';
    position: absolute;
    right: 10px;
    top: 6px;
    border: 3px solid transparent;
    border-top: 4px solid #2e2e2e;
    border-bottom: none;
}

.split {
    width: 1px;
    height: 20px;
    background: #888;
    margin: 0 5px;
}

.win-buttons {
    display: flex;
    height: 17px;
    margin: 0 3px 0 16px;
    border: 1px solid #a8a8a8;
    border-top: none;
    border-radius: 0 0 5px 5px;
    overflow: hidden;
    background: linear-gradient(#8c8c8c 45%, #4a4a4a 50%, #787878);
}

.win-buttons button {
    width: 28px;
    border-right: 1px solid #b0b0b0;
}

.win-buttons .restore {
    width: 25px;
}

.win-buttons .close {
    width: 48px;
    border: none;
    background: linear-gradient(#d88a7a 45%, #b8280c 50%, #d8603c);
}

.tabs {
    display: flex;
    gap: 2px;
}

.tabs button {
    padding: 0 10px 2px;
    color: #f4f4f4;
    height: 18px;
}

.tabs .active {
    background: linear-gradient(#c6c6c6, #fdfdfd);
    color: #333;
}

.tabs .mini {
    padding-left: 20px;
}

/* ribbon */
.ribbon {
    display: grid;
    grid-template-columns: 79px 63px 234px 337px 55px 127px 99px 210px 142px 89px 73px;
    height: 92px;
    background: linear-gradient(#d5d5d5, #8c8c8c);
    border-top: 1px solid #fff;
    border-bottom: 2px solid #4c4c4c;
}

.panel {
    display: flex;
    flex-direction: column;
    min-width: 0;
    background: #fefefe;
    border-right: 1px solid #9c9c9c;
}

.panel-body {
    flex: 1;
    display: grid;
}

.one {
    grid-template-columns: 1fr;
}

.create {
    grid-template-columns: 48px 44px 65px 1fr;
}

.modify {
    grid-template-columns: 42px 34px 77px 80px 1fr;
}

.features {
    grid-template-columns: 51px 1fr;
}

.surface {
    grid-template-columns: 114px 1fr;
}

.plastic {
    grid-template-columns: 55px 1fr;
}

.panel-label {
    display: flex;
    align-items: center;
    justify-content: center;
    gap: 6px;
    height: 17px;
    background: #efefef;
    border-top: 1px solid #dcdcdc;
    margin: 0 1px;
}

.more::after {
    content: '';
    border: 4px solid transparent;
    border-top: 4px solid currentColor;
    border-bottom: none;
}

.big {
    position: relative;
    flex-direction: column;
    justify-content: flex-start;
    padding-top: 4px;
}

.pic {
    display: block;
    height: 35px;
}

.cap {
    white-space: pre;
    line-height: 15px;
    text-align: center;
}

.on {
    margin: 1px 2px 1px;
    padding-top: 2px;
    border: 1px solid #3a7cc0;
    background: linear-gradient(#b6d5f3 36px, #4a88c8 36px, #a5cbf0 37px, #b9d8f6);
}

.off {
    color: #b5b5b5;
}

.big.side::after,
.big.under::after {
    content: '';
    position: absolute;
    border: 3px solid transparent;
    border-top: 3px solid #444;
    border-bottom: none;
}

.big.side::after {
    right: 3px;
    bottom: 16px;
}

.big.under::after {
    bottom: 14px;
}

.stack {
    padding-left: 7px;
    padding-top: 1px;
}

.stack button {
    height: 24px;
    gap: 5px;
}

.stack .more::after {
    border-width: 3px 3px 0;
    margin-left: 5px;
}

/* model browser */
.work {
    flex: 1;
    display: flex;
}

.browser {
    width: 240px;
    display: flex;
    flex-direction: column;
    padding: 0 3px 4px;
    background: #f0f0f0;
    font-family: "DejaVu Sans Condensed", "Liberation Sans", sans-serif;
    color: #111;
}

.grip {
    display: flex;
    align-items: center;
    gap: 5px;
    height: 16px;
}

.grip i {
    width: 224px;
    height: 2px;
    border: 1px solid #999;
    border-left: none;
}

.browser-head {
    display: flex;
    justify-content: space-between;
    height: 21px;
    padding: 0 2px 0 8px;
    background: #a9a9a9;
}

.browser-head .more {
    gap: 4px;
    color: #fff;
    font-family: "Open Sans", sans-serif;
    font-size: 12px;
    font-weight: 700;
}

.browser-tools {
    display: flex;
    align-items: center;
    gap: 7px;
    height: 26px;
    padding-left: 3px;
}

.browser-tools i {
    width: 1px;
    height: 18px;
    background: #999;
}

.tree-box {
    flex: 1;
    border: 1px solid #646464;
    background: #fff;
}

.tree {
    list-style: none;
    margin: 0;
    padding: 1px 0 0 5px;
}

.tree li {
    display: flex;
    align-items: center;
    gap: 3px;
    height: 18px;
}

.branch {
    display: block;
    width: 16px;
    height: 18px;
    background: linear-gradient(#888, #888) 3px 0 / 1px 18px no-repeat, linear-gradient(#888, #888) 3px 9px / 11px 1px no-repeat;
}

.leaf .branch {
    background-size: 1px 9px, 11px 1px;
}

.plus .branch {
    position: relative;
}

.plus .branch::before {
    content: '';
    position: absolute;
    left: -1px;
    top: 5px;
    width: 7px;
    height: 7px;
    border: 1px solid #777;
    background: linear-gradient(#000, #000) 1px 3px / 5px 1px no-repeat, linear-gradient(#000, #000) 3px 1px / 1px 5px no-repeat, #fff;
}

.note {
    margin: 32px 0 0 3px;
    font-family: Lato, "Open Sans", sans-serif;
    font-size: 28px;
    font-variant-ligatures: none;
    line-height: 36px;
    color: #000;
    white-space: nowrap;
}

/* graphics window */
.document {
    flex: 1;
    min-width: 0;
    display: flex;
    flex-direction: column;
    background: #f4f4f4;
}

.viewport {
    position: relative;
    flex: 1;
    border-left: 1px solid #555;
    border-right: 2px solid #f0f0f0;
    background: linear-gradient(#2d2d2d, #a4a4a4);
}

.scene {
    position: absolute;
    inset: 0;
    width: 100%;
    height: 100%;
}

.picker {
    position: absolute;
    left: 880px;
    top: 372px;
    display: flex;
    height: 21px;
    font-family: "DejaVu Sans Condensed", "Liberation Sans", sans-serif;
    color: #111;
}

.handle {
    width: 7px;
    margin-right: 4px;
    border: 1px solid #888;
    border-radius: 3px;
    background: #dcdcdc;
}

.choice {
    width: 65px;
    border: 1px solid #666f80;
    border-radius: 10px 0 0 10px;
    padding-left: 4px;
    background: linear-gradient(#9dbae6, #7b9dd2);
}

.pick-drop {
    width: 14px;
    border: 1px solid #777;
    border-left: none;
    border-radius: 0 10px 10px 0;
    background: linear-gradient(#f6f6f6, #bbb);
}

.pick-drop::after {
    content: '';
    border: 4px solid transparent;
    border-top: 6px solid #222;
    border-bottom: none;
}

.doc-buttons {
    position: absolute;
    right: 0;
    top: 6px;
    display: flex;
    gap: 6px;
}

.cube {
    position: absolute;
    right: 16px;
    top: 47px;
}

.cube text {
    font-size: 8px;
    font-weight: 700;
    fill: #5d6066;
}

.cube .up {
    font-size: 7px;
}

.navbar {
    position: absolute;
    right: 2px;
    top: 146px;
    width: 31px;
    height: 194px;
    display: flex;
    flex-direction: column;
    align-items: center;
    justify-content: space-between;
    border: 1px solid #333;
    border-radius: 4px;
    background: #767676;
    box-shadow: inset 0 0 0 1px #868686;
    padding: 1px 0;
}

.navbar .end {
    align-self: flex-end;
    padding-right: 2px;
}

.navbar .end:last-child {
    padding-top: 5px;
}

.navbar hr {
    width: 26px;
    height: 1px;
    border: none;
    margin: 0;
    background: #555;
}

.tri {
    border: 3px solid transparent;
    border-top: 3px solid #4c4c4c;
    border-bottom: none;
}

.triad {
    position: absolute;
    left: 19px;
    bottom: 34px;
}

.triad text {
    font-family: "Liberation Sans", sans-serif;
    font-size: 12px;
}

.doc-tabs {
    display: flex;
    height: 20px;
    border-top: 1px solid #6a6a6a;
    margin-top: 2px;
    background: linear-gradient(#dadada, #b6b6b6);
}

.sq {
    width: 20px;
    border: 1px solid #444;
    background: #d8dbe0;
}

.doc {
    height: 17px;
    padding: 0 11px 0 8px;
    margin-left: 1px;
    border: 1px solid #777;
    border-top: none;
    border-radius: 0 0 7px 7px;
    background: #cfcfcf;
    color: #222;
}

.current {
    gap: 4px;
    margin-left: 0;
    padding: 0 9px 0 8px;
    background: #fff;
}

/* status bar and taskbar */
.status {
    display: flex;
    justify-content: flex-end;
    height: 23px;
    border-top: 1px solid #999;
    background: linear-gradient(#fff, #b2b2b2);
    color: #222;
}

.status span {
    width: 31px;
    line-height: 24px;
    padding-left: 7px;
    border-left: 1px solid #ccc;
}

.status span:first-child {
    width: 28px;
    border: none;
}

.taskbar {
    display: flex;
    align-items: center;
    height: 39px;
    border-top: 1px solid #777;
    background: radial-gradient(ellipse 300px 40px at 45% 80%, #3a3430, transparent), radial-gradient(ellipse 260px 40px at 62% 70%, #3a3531, transparent), #151515;
    color: #fff;
}

.taskbar button {
    width: 62px;
    height: 38px;
}

.taskbar button:first-child {
    width: 54px;
    margin-right: 4px;
}

.taskbar button:nth-child(4) {
    margin-right: 2px;
}

.taskbar .running {
    width: 58px;
    border: 1px solid #ccc;
    border-radius: 2px;
    background: linear-gradient(135deg, #d4d4d4, #7a7a7a 50%, #a5a5a5);
}

.tray {
    display: flex;
    align-items: center;
    gap: 8px;
    margin-left: auto;
}

.tray time {
    display: flex;
    flex-direction: column;
    align-items: center;
    width: 60px;
    margin: 0 7px 0 2px;
    line-height: 18px;
}

.taskbar .desk {
    width: 22px;
    border: 1px solid #666;
    margin-right: 1px;
    background: linear-gradient(135deg, #3c3c3c, #111 60%);
}
</style>
